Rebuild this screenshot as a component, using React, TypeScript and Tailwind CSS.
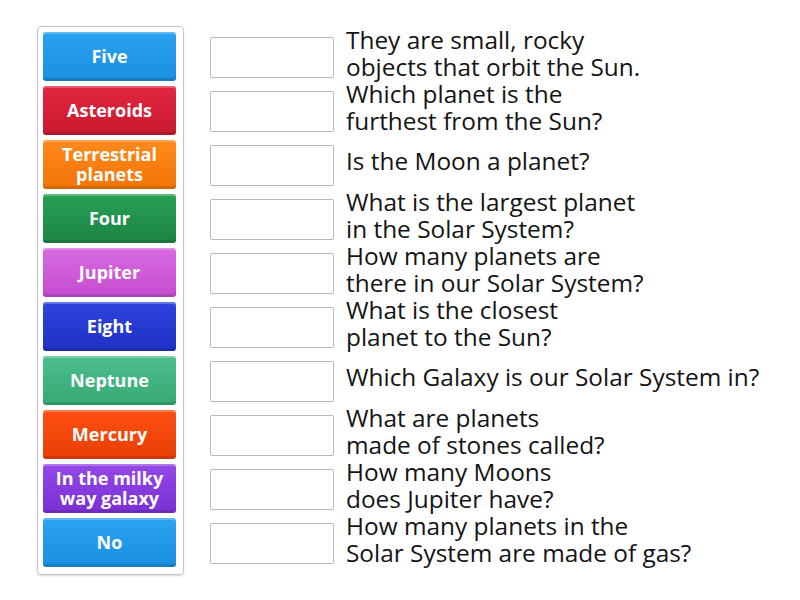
import React from "react";

const tiles: { label: React.ReactNode; top: string; bottom: string }[] = [
  { label: "Five", top: "#2aa3f0", bottom: "#1a8fe0" },
  { label: "Asteroids", top: "#e2253f", bottom: "#c81a30" },
  { label: <>Terrestrial<br />planets</>, top: "#ff8a1c", bottom: "#f27408" },
  { label: "Four", top: "#27a055", bottom: "#1c8444" },
  { label: "Jupiter", top: "#d86ae0", bottom: "#c44ccf" },
  { label: "Eight", top: "#2e44de", bottom: "#1f30c4" },
  { label: "Neptune", top: "#4cc08d", bottom: "#36a874" },
  { label: "Mercury", top: "#ff5014", bottom: "#e83e04" },
  { label: <>In the milky<br />way galaxy</>, top: "#9448e6", bottom: "#7a2fd4" },
  { label: "No", top: "#2aa3f0", bottom: "#1a8fe0" },
];

const questions: React.ReactNode[] = [
  <>They are small, rocky<br />objects that orbit the Sun.</>,
  <>Which planet is the<br />furthest from the Sun?</>,
  <>Is the Moon a planet?</>,
  <>What is the largest planet<br />in the Solar System?</>,
  <>How many planets are<br />there in our Solar System?</>,
  <>What is the closest<br />planet to the Sun?</>,
  <>Which Galaxy is our Solar System in?</>,
  <>What are planets<br />made of stones called?</>,
  <>How many Moons<br />does Jupiter have?</>,
  <>How many planets in the<br />Solar System are made of gas?</>,
];

export default function App() {
  return (
    <div
      className="w-[800px] h-[600px] bg-white flex"
      style={{ fontFamily: '"Open Sans", "Noto Sans", sans-serif' }}
    >
      <div className="ml-[37px] mt-[26px] h-[549px] w-[147px] border border-[#c4c4c4] rounded-[4px] shadow-[0_1px_2px_rgba(0,0,0,0.15)] px-[5px] pt-[5px] flex flex-col gap-[5px]">
        {tiles.map((t, i) => (
          <div
            key={i}
            className="h-[49px] w-[133px] rounded-[3px] flex items-center justify-center text-center text-white font-bold text-[18px] leading-[20px] shadow-[inset_0_2px_0_rgba(255,255,255,0.25),inset_0_-3px_0_rgba(0,0,0,0.12)]"
            style={{ background: `linear-gradient(${t.top}, ${t.bottom})` }}
          >
            <span className="-mt-[2px]">{t.label}</span>
          </div>
        ))}
      </div>
      <div className="ml-[26px] mt-[30px] flex flex-col">
        {questions.map((q, i) => (
          <div key={i} className="h-[54px] flex items-center">
            <div className="w-[124px] h-[41px] border border-[#b8b8b8] rounded-[2px] bg-white shrink-0" />
            <div className="ml-[12px] text-[24.4px] leading-[27px] text-[#141414] whitespace-nowrap -mt-[9px]">
              {q}
            </div>
          </div>
        ))}
      </div>
    </div>
  );
}
